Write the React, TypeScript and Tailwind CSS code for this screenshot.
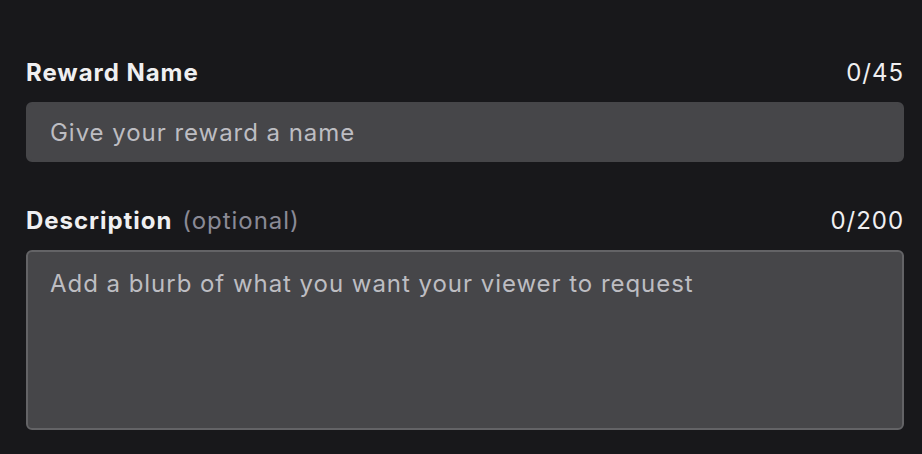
export default function App() {
  return (
    <div
      className="w-[922px] h-[454px] bg-[#18181b] pl-[26px] pr-[18px] pt-[58px] text-[24px] tracking-[0.04em] text-[#efeff1]"
      style={{ fontFamily: "Inter, 'Noto Sans', sans-serif" }}
    >
      <div className="flex items-center justify-between h-[30px] leading-[30px]">
        <span className="font-bold">Reward Name</span>
        <span>0/45</span>
      </div>
      <input
        className="mt-[14px] block w-full h-[60px] rounded-[6px] border-2 border-[#464649] bg-[#464649] px-[22px] text-[24px] text-[#efeff1] placeholder:text-[#bdbdc2] outline-none"
        placeholder="Give your reward a name"
      />
      <div className="mt-[44px] flex items-center justify-between h-[30px] leading-[30px]">
        <div className="flex items-center">
          <span className="font-bold">Description</span>
          <span className="ml-[10px] text-[#8a8a96]">(optional)</span>
        </div>
        <span>0/200</span>
      </div>
      <textarea
        className="mt-[14px] block w-full h-[180px] resize-none rounded-[6px] border-2 border-[#636366] bg-[#464649] px-[22px] pt-[14px] pb-[10px] text-[24px] leading-[36px] text-[#efeff1] placeholder:text-[#bdbdc2] outline-none"
        placeholder="Add a blurb of what you want your viewer to request"
      />
    </div>
  )
}
